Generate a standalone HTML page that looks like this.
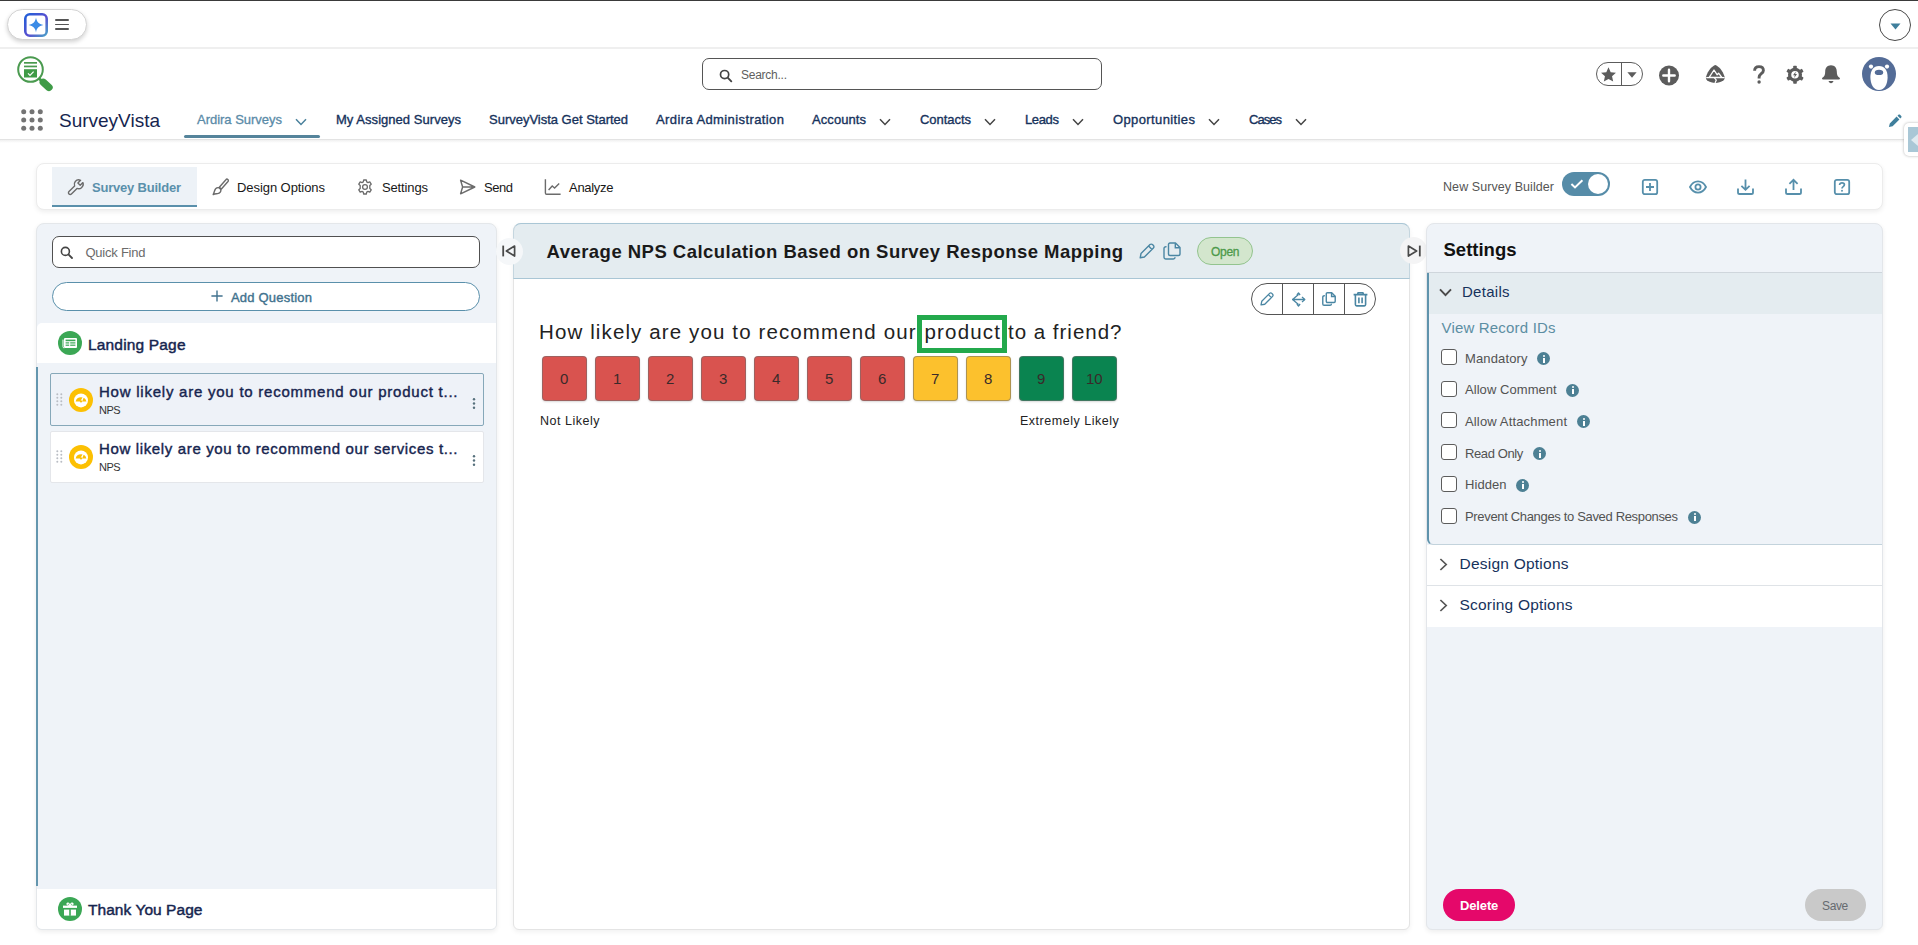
<!DOCTYPE html>
<html>
<head>
<meta charset="utf-8">
<title>SurveyVista</title>
<style>
*{box-sizing:border-box;margin:0;padding:0}
html,body{width:1918px;height:945px;overflow:hidden;background:#fff}
body{position:relative;font-family:"Liberation Sans",sans-serif;color:#16325c;font-size:13px}
.a{position:absolute}
.t{position:absolute;white-space:nowrap;line-height:1}
svg{position:absolute;overflow:visible}
.nav{font-size:13px;color:#16325c;-webkit-text-stroke:0.35px #16325c;top:113px}
.chev{top:117.5px;width:12px;height:8px}
.tab{font-size:13px;color:#181818;top:181px}
.cb{position:absolute;left:1441px;width:16px;height:16px;border:1px solid #5c5c5c;border-radius:3px;background:#fff}
.cbl{font-size:13px;color:#525252;left:1465px}
.info{position:absolute;width:13px;height:13px;border-radius:50%;background:#4d8094}
.info:before{content:"";position:absolute;left:5.5px;top:2.5px;width:2px;height:2px;background:#fff;border-radius:50%}
.info:after{content:"";position:absolute;left:5.5px;top:5.5px;width:2px;height:5px;background:#fff}
.nps{position:absolute;top:356px;width:44.5px;height:44.5px;border-radius:4px;border:1px solid rgba(110,110,110,.55);font-size:15px;line-height:44px;text-align:center;color:#3a2a2a;box-shadow:0 1px 2px rgba(0,0,0,.15)}
.r{background:#d9534f}.y{background:#fcc12d}.g{background:#0a8450}
</style>
</head>
<body>
<!-- TOP STRIP -->
<div class="a" style="left:0;top:0;width:1918px;height:1px;background:#3a3a3a"></div>
<div class="a" style="left:0;top:47px;width:1918px;height:2px;background:#efefef"></div>
<!-- top-left pill -->
<div class="a" style="left:7px;top:9px;width:80px;height:31px;border-radius:16px;background:#fff;border:1px solid #d4d4d4;box-shadow:0 2px 4px rgba(0,0,0,.18)"></div>
<svg style="left:24px;top:13px" width="24" height="24" viewBox="0 0 24 24">
<defs><linearGradient id="gb" x1="0" y1="0" x2="1" y2="1"><stop offset="0" stop-color="#1f5fd8"/><stop offset=".55" stop-color="#5a4fd0"/><stop offset="1" stop-color="#4aa0c8"/></linearGradient></defs>
<rect x="1.3" y="1.3" width="21.4" height="21.4" rx="4.5" fill="#fff" stroke="url(#gb)" stroke-width="2.6"/>
<path d="M12 4.6 C12.7 9 14.6 10.9 19.4 12 C14.6 13.1 12.7 15 12 19.4 C11.3 15 9.4 13.1 4.6 12 C9.4 10.9 11.3 9 12 4.6Z" fill="#3b8be6"/>
</svg>
<div class="a" style="left:55px;top:19px;width:14px;height:1.8px;background:#555;border-radius:1px"></div>
<div class="a" style="left:55px;top:23.5px;width:14px;height:1.8px;background:#555;border-radius:1px"></div>
<div class="a" style="left:55px;top:28px;width:14px;height:1.8px;background:#555;border-radius:1px"></div>
<!-- top-right circle -->
<div class="a" style="left:1879px;top:9px;width:32px;height:32px;border-radius:50%;border:1px solid #4a4a4a;background:#fff"></div>
<svg style="left:1889.5px;top:22.5px" width="11" height="7" viewBox="0 0 11 7"><path d="M0.5 0.5 H10.5 L5.5 6.5Z" fill="#3f7f9c"/></svg>
<!-- SECTION:TOP -->
<!-- logo -->
<svg style="left:14px;top:53px" width="44" height="42" viewBox="0 0 44 42">
<circle cx="16.5" cy="16.5" r="12.3" fill="#fff" stroke="#4a9a4f" stroke-width="2"/>
<line x1="25" y1="25.5" x2="30" y2="30" stroke="#3f9b47" stroke-width="3"/><line x1="29.3" y1="29.3" x2="35" y2="34.4" stroke="#3f9b47" stroke-width="7.4" stroke-linecap="round"/>
<rect x="10" y="9" width="13" height="1.7" fill="#4a9a4f"/>
<rect x="10" y="12.6" width="13" height="1.7" fill="#4a9a4f"/>
<rect x="10" y="16.2" width="13" height="8.3" fill="#3f9b47"/>
<path d="M14 20.4 l2 2 l3.6 -3.8" fill="none" stroke="#fff" stroke-width="1.2"/>
</svg>
<!-- search -->
<div class="a" style="left:702px;top:58px;width:400px;height:32px;border:1px solid #555;border-radius:7px;background:#fff"></div>
<svg style="left:719px;top:69px" width="14" height="14" viewBox="0 0 14 14"><circle cx="5.6" cy="5.6" r="4.1" fill="none" stroke="#444" stroke-width="1.7"/><line x1="8.7" y1="8.7" x2="12.3" y2="12.3" stroke="#444" stroke-width="1.9" stroke-linecap="round"/></svg>
<span class="t" id="srch" style="left:741px;top:68.8px;font-size:12px;color:#5e5e5e;letter-spacing:-0.254px">Search...</span>
<!-- star pill -->
<div class="a" style="left:1596px;top:62px;width:47px;height:24px;border:1px solid #5c5c5c;border-radius:12px;background:#fff"></div>
<div class="a" style="left:1621px;top:62px;width:1px;height:24px;background:#5c5c5c"></div>
<svg style="left:1600px;top:66px" width="17" height="17" viewBox="0 0 24 24"><path d="M12 1.8 l3.1 6.9 7.4 .8 -5.5 5.1 1.6 7.4 -6.6 -3.8 -6.6 3.8 1.6 -7.4 -5.5 -5.1 7.4 -.8z" fill="#5c5c5c"/></svg>
<svg style="left:1627px;top:72px" width="10" height="6" viewBox="0 0 10 6"><path d="M0.4 0.3 H9.6 L5 5.8Z" fill="#5c5c5c"/></svg>
<!-- plus -->
<svg style="left:1659px;top:64.5px" width="20" height="20" viewBox="0 0 20 20"><circle cx="10" cy="10.5" r="10" fill="#5c5c5c"/><path d="M10 4.8 V16.2 M4.3 10.5 H15.7" stroke="#fff" stroke-width="2.4" stroke-linecap="round"/></svg>
<!-- trailhead -->
<svg style="left:1705px;top:64px" width="21" height="20" viewBox="0 0 21 20">
<path d="M10.3 1 C13.5 2.2 17.5 6 19.6 12.8 C19.9 14 19.6 15.5 18.6 16.3 C16 18.3 13 19 10.3 19 C7.6 19 4.6 18.3 2 16.3 C1 15.5 .7 14 1 12.8 C3.1 6 7.1 2.2 10.3 1Z" fill="#5c5c5c"/>
<path d="M4.2 13.4 L9 6 L12.2 10.8 L13.6 9.2 L16.8 13.4Z" fill="none" stroke="#fff" stroke-width="1.3" stroke-linejoin="round"/>
<path d="M1.2 13.6 H19.6" stroke="#fff" stroke-width="1.3"/>
<path d="M9.3 13.6 L11.3 16 L10 19" stroke="#fff" stroke-width="1.2" fill="none"/>
</svg>
<!-- help -->
<svg style="left:1752px;top:65px" width="14" height="19" viewBox="0 0 14 19"><path d="M2.6 5.8 C2.6 3 4.6 1.6 7 1.6 C9.6 1.6 11.4 3.1 11.4 5.4 C11.4 8.6 7.1 8.8 7.1 12.2 V13.4" fill="none" stroke="#5c5c5c" stroke-width="2.9"/><circle cx="7.1" cy="17" r="1.7" fill="#5c5c5c"/></svg>
<!-- gear -->
<svg style="left:1785px;top:64px" width="20" height="21" viewBox="0 0 20 21">
<g transform="translate(10 10.7) scale(.9)" fill="#5c5c5c">
<circle r="6" fill="none" stroke="#5c5c5c" stroke-width="3.6"/>
<g id="tth"><rect x="-2" y="-10" width="4" height="4.2" rx=".8"/></g>
<use href="#tth" transform="rotate(60)"/><use href="#tth" transform="rotate(120)"/><use href="#tth" transform="rotate(180)"/><use href="#tth" transform="rotate(240)"/><use href="#tth" transform="rotate(300)"/>
<path d="M.9 -3.6 L-2.2 .7 H-.2 L-.9 3.6 L2.2 -.7 H.2Z"/>
</g></svg>
<!-- bell -->
<svg style="left:1821px;top:64px" width="20" height="20" viewBox="0 0 20 20"><path d="M10 1.2 C6.2 1.2 4.2 4 4.2 7.4 C4.2 11 3.4 12.4 1.4 13.8 C.7 14.3 1 15.6 2 15.6 H18 C19 15.6 19.3 14.3 18.6 13.8 C16.6 12.4 15.8 11 15.8 7.4 C15.8 4 13.8 1.2 10 1.2Z" fill="#5c5c5c"/><path d="M7.6 17 H12.4 C12.2 18.4 11.2 19.2 10 19.2 C8.8 19.2 7.8 18.4 7.6 17Z" fill="#5c5c5c"/></svg>
<!-- avatar -->
<svg style="left:1862px;top:57px" width="34" height="34" viewBox="0 0 34 34">
<circle cx="17" cy="17" r="17" fill="#546c97"/>
<path d="M17 9 C22.6 9 25.6 13.5 25.6 20 C25.6 27 22.6 33 17 33 C11.4 33 8.4 27 8.4 20 C8.4 13.5 11.4 9 17 9Z" fill="#fff"/>
<circle cx="9" cy="9.6" r="2.1" fill="#fff"/><circle cx="25" cy="9.6" r="2.1" fill="#fff"/>
<ellipse cx="17" cy="15.4" rx="4.2" ry="2.6" fill="#546c97"/>
</svg>
<!-- SECTION:HEADER -->
<!-- nav bottom border/shadow -->
<div class="a" style="left:0;top:139px;width:1918px;height:1px;background:#e3e3e3"></div>
<div class="a" style="left:0;top:140px;width:1918px;height:3px;background:linear-gradient(#f0f0f0,#fff)"></div>
<!-- waffle -->
<svg style="left:21px;top:109px" width="22" height="22" viewBox="0 0 22 22" fill="#747474">
<circle cx="2.7" cy="2.7" r="2.5"/><circle cx="11" cy="2.7" r="2.5"/><circle cx="19.3" cy="2.7" r="2.5"/>
<circle cx="2.7" cy="11" r="2.5"/><circle cx="11" cy="11" r="2.5"/><circle cx="19.3" cy="11" r="2.5"/>
<circle cx="2.7" cy="19.3" r="2.5"/><circle cx="11" cy="19.3" r="2.5"/><circle cx="19.3" cy="19.3" r="2.5"/>
</svg>
<span class="t" id="sv" style="left:59px;top:111px;font-size:19px;color:#16254f;letter-spacing:-0.003px">SurveyVista</span>
<div class="a" style="left:184px;top:134.7px;width:136px;height:3.2px;background:#55849b;border-radius:1.5px"></div>
<span class="t nav" id="n1" style="left:197px;color:#5a8ba8;-webkit-text-stroke:0.3px #5a8ba8;letter-spacing:-0.019px">Ardira Surveys</span>
<span class="t nav" id="n2" style="left:336px;letter-spacing:0.040px">My Assigned Surveys</span>
<span class="t nav" id="n3" style="left:489px;letter-spacing:-0.010px">SurveyVista Get Started</span>
<span class="t nav" id="n4" style="left:656px;letter-spacing:0.402px">Ardira Administration</span>
<span class="t nav" id="n5" style="left:812px;letter-spacing:0.074px">Accounts</span>
<span class="t nav" id="n6" style="left:920px;letter-spacing:-0.045px">Contacts</span>
<span class="t nav" id="n7" style="left:1025px;letter-spacing:-0.355px">Leads</span>
<span class="t nav" id="n8" style="left:1113px;letter-spacing:0.389px">Opportunities</span>
<span class="t nav" id="n9" style="left:1249px;letter-spacing:-0.965px">Cases</span>
<svg class="chev" style="left:295px"><path d="M1 1.2 L6 6.4 L11 1.2" fill="none" stroke="#4a819c" stroke-width="1.5"/></svg>
<svg class="chev" style="left:879px"><path d="M1 1.2 L6 6.4 L11 1.2" fill="none" stroke="#444" stroke-width="1.5"/></svg>
<svg class="chev" style="left:984px"><path d="M1 1.2 L6 6.4 L11 1.2" fill="none" stroke="#444" stroke-width="1.5"/></svg>
<svg class="chev" style="left:1072px"><path d="M1 1.2 L6 6.4 L11 1.2" fill="none" stroke="#444" stroke-width="1.5"/></svg>
<svg class="chev" style="left:1208px"><path d="M1 1.2 L6 6.4 L11 1.2" fill="none" stroke="#444" stroke-width="1.5"/></svg>
<svg class="chev" style="left:1295px"><path d="M1 1.2 L6 6.4 L11 1.2" fill="none" stroke="#444" stroke-width="1.5"/></svg>
<!-- pencil -->
<svg style="left:1888px;top:114px" width="14" height="14" viewBox="0 0 14 14"><path d="M8.6 2.6 L11.4 5.4 L4.6 12.2 L.9 13.1 L1.8 9.4Z M9.5 1.7 L10.4 .8 C10.9 .3 11.6 .3 12.1 .8 L13.2 1.9 C13.7 2.4 13.7 3.1 13.2 3.6 L12.3 4.5Z" fill="#3f7f9c"/></svg>
<!-- side tab -->
<div class="a" style="left:1904px;top:123px;width:20px;height:33px;background:#fff;border-radius:5px;box-shadow:0 0 3px rgba(0,0,0,.3)"></div>
<div class="a" style="left:1908px;top:127px;width:10px;height:25px;background:#a9c7d6"></div>
<svg style="left:1911px;top:134px" width="7" height="12" viewBox="0 0 7 12"><path d="M7 0 L0 6 L7 12Z" fill="#dfeaf0"/></svg>
<!-- SECTION:NAV -->
<!-- tab bar card -->
<div class="a" style="left:36px;top:163px;width:1847px;height:47px;background:#fff;border:1px solid #ececec;border-radius:8px;box-shadow:0 2px 5px rgba(0,0,0,.07)"></div>
<div class="a" style="left:52px;top:167px;width:145px;height:40px;background:#edf2f7;border-bottom:2px solid #5a90ab"></div>
<!-- wrench -->
<svg style="left:67px;top:178px" width="18" height="18" viewBox="0 0 18 18"><path d="M15.9 4.6 L13.2 7.3 L10.9 5 L13.6 2.3 C11.8 1.5 9.6 1.9 8.3 3.5 C7.2 4.8 7 6.5 7.6 8 L2 13.6 C1.3 14.3 1.3 15.3 2 16 C2.7 16.7 3.7 16.7 4.4 16 L10 10.4 C11.5 11 13.2 10.8 14.5 9.7 C16.1 8.4 16.6 6.4 15.9 4.6Z" fill="none" stroke="#6b6b6b" stroke-width="1.4" stroke-linejoin="round"/></svg>
<span class="t" id="t1" style="left:92px;top:181px;font-size:13px;font-weight:bold;color:#5a90ab;letter-spacing:-0.213px">Survey Builder</span>
<!-- brush -->
<svg style="left:212px;top:178px" width="18" height="18" viewBox="0 0 18 18"><path d="M15.7 1.4 C16.5 2 16.5 2.9 16 3.5 L9.4 11 L7.3 9.2 L13.9 1.7 C14.4 1.1 15.2 1 15.7 1.4Z M7 9.8 L8.8 11.4 C9.3 13.3 8 15.3 5.6 15.6 C4 15.8 2.4 15.6 1.2 16.6 C1.8 15.2 2.2 14.2 2.6 12.8 C3.2 10.7 5 9.3 7 9.8Z" fill="none" stroke="#6b6b6b" stroke-width="1.4" stroke-linejoin="round"/></svg>
<span class="t tab" id="t2" style="left:237px;letter-spacing:-0.069px">Design Options</span>
<!-- gear outline -->
<svg style="left:357px;top:179px" width="16" height="16" viewBox="0 0 16 16"><path d="M6.7 1 H9.3 L9.7 2.9 L11 3.6 L12.8 2.9 L14.2 5.2 L12.8 6.5 V8 V9.5 L14.2 10.8 L12.8 13.1 L11 12.4 L9.7 13.1 L9.3 15 H6.7 L6.3 13.1 L5 12.4 L3.2 13.1 L1.8 10.8 L3.2 9.5 V6.5 L1.8 5.2 L3.2 2.9 L5 3.6 L6.3 2.9Z" fill="none" stroke="#6b6b6b" stroke-width="1.3" stroke-linejoin="round"/><circle cx="8" cy="8" r="2.4" fill="none" stroke="#6b6b6b" stroke-width="1.3"/></svg>
<span class="t tab" id="t3" style="left:382px;letter-spacing:-0.141px">Settings</span>
<!-- send -->
<svg style="left:459px;top:179px" width="17" height="16" viewBox="0 0 17 16"><path d="M1.6 1.2 L15.8 8 L1.6 14.8 L3.6 8Z M3.6 8 H15" fill="none" stroke="#6b6b6b" stroke-width="1.4" stroke-linejoin="round"/></svg>
<span class="t tab" id="t4" style="left:484px;letter-spacing:-0.458px">Send</span>
<!-- analyze -->
<svg style="left:544px;top:178px" width="18" height="18" viewBox="0 0 18 18"><path d="M1.4 1.2 V15 C1.4 15.8 1.8 16.2 2.6 16.2 H16.6" fill="none" stroke="#6b6b6b" stroke-width="1.4"/><path d="M4.6 12 L8.2 8 L10.6 10 L15.2 5.6" fill="none" stroke="#6b6b6b" stroke-width="1.4"/></svg>
<span class="t tab" id="t5" style="left:569px;letter-spacing:-0.292px">Analyze</span>
<span class="t" id="t6" style="left:1443px;top:181px;font-size:12.5px;color:#555;letter-spacing:0.073px">New Survey Builder</span>
<!-- toggle -->
<div class="a" style="left:1562px;top:172px;width:48px;height:24px;border-radius:12px;background:#568ca8"></div>
<div class="a" style="left:1588px;top:174px;width:20px;height:20px;border-radius:50%;background:#fff"></div>
<svg style="left:1570px;top:179px" width="14" height="10" viewBox="0 0 14 10"><path d="M1.4 5 L5 8.4 L12.4 1.2" fill="none" stroke="#fff" stroke-width="2"/></svg>
<!-- right icons -->
<svg style="left:1642px;top:179px" width="16" height="16" viewBox="0 0 16 16"><rect x=".8" y=".8" width="14.4" height="14.4" rx="2" fill="none" stroke="#568fab" stroke-width="1.8"/><path d="M8 4 V12 M4 8 H12" stroke="#568fab" stroke-width="1.8"/></svg>
<svg style="left:1689px;top:180px" width="18" height="14" viewBox="0 0 18 14"><path d="M1 7 C3 3 5.8 1.4 9 1.4 C12.2 1.4 15 3 17 7 C15 11 12.2 12.6 9 12.6 C5.8 12.6 3 11 1 7Z" fill="none" stroke="#568fab" stroke-width="1.8"/><circle cx="9" cy="7" r="2.6" fill="none" stroke="#568fab" stroke-width="1.8"/></svg>
<svg style="left:1737px;top:179px" width="17" height="16" viewBox="0 0 17 16"><path d="M1 9.6 V13.4 C1 14.4 1.6 15 2.6 15 H14.4 C15.4 15 16 14.4 16 13.4 V9.6" fill="none" stroke="#568fab" stroke-width="1.8"/><path d="M8.5 .6 V10.6 M4.4 6.8 L8.5 10.8 L12.6 6.8" fill="none" stroke="#568fab" stroke-width="1.8"/></svg>
<svg style="left:1785px;top:179px" width="17" height="16" viewBox="0 0 17 16"><path d="M1 9.6 V13.4 C1 14.4 1.6 15 2.6 15 H14.4 C15.4 15 16 14.4 16 13.4 V9.6" fill="none" stroke="#568fab" stroke-width="1.8"/><path d="M8.5 11 V1 M4.4 4.8 L8.5 .8 L12.6 4.8" fill="none" stroke="#568fab" stroke-width="1.8"/></svg>
<svg style="left:1834px;top:179px" width="16" height="16" viewBox="0 0 16 16"><rect x=".8" y=".8" width="14.4" height="14.4" rx="2" fill="none" stroke="#568fab" stroke-width="1.8"/><path d="M5.6 6 C5.6 4.6 6.6 3.8 8 3.8 C9.4 3.8 10.4 4.6 10.4 5.8 C10.4 7.6 8 7.6 8 9.4" fill="none" stroke="#568fab" stroke-width="1.7"/><circle cx="8" cy="11.7" r=".95" fill="#568fab"/></svg>
<!-- SECTION:TABBAR -->
<!-- left panel -->
<div class="a" style="left:36px;top:223px;width:461px;height:707px;background:#eff3f8;border:1px solid #e4e7ea;border-radius:8px 8px 6px 6px;box-shadow:0 2px 5px rgba(0,0,0,.07);overflow:hidden">
 <div class="a" style="left:0;top:99px;width:461px;height:40px;background:#fff;border-radius:5px 0 0 0"></div>
 <div class="a" style="left:0;top:665px;width:461px;height:42px;background:#fff"></div>
</div>
<div class="a" style="left:36px;top:367px;width:2.2px;height:519px;background:#6496ae"></div>
<div class="a" style="left:52px;top:236px;width:428px;height:32px;background:#fff;border:1px solid #505050;border-radius:7px"></div>
<svg style="left:60px;top:246px" width="14" height="14" viewBox="0 0 14 14"><circle cx="5.4" cy="5.4" r="4" fill="none" stroke="#444" stroke-width="1.6"/><line x1="8.4" y1="8.4" x2="12" y2="12" stroke="#444" stroke-width="1.8" stroke-linecap="round"/></svg>
<span class="t" id="qf" style="left:85.5px;top:246px;font-size:13px;color:#6b6b6b;letter-spacing:-0.238px">Quick Find</span>
<div class="a" style="left:52px;top:282px;width:428px;height:29px;background:#fff;border:1px solid #5a90ab;border-radius:15px"></div>
<svg style="left:211px;top:290px" width="12" height="12" viewBox="0 0 12 12"><path d="M6 .4 V11.6 M.4 6 H11.6" stroke="#41728e" stroke-width="1.4"/></svg>
<span class="t" id="aq" style="left:231px;top:290.5px;font-size:13px;color:#41728e;-webkit-text-stroke:.4px #41728e;letter-spacing:0.202px">Add Question</span>
<!-- landing page -->
<svg style="left:57.5px;top:331px" width="24" height="24" viewBox="0 0 24 24"><circle cx="12" cy="12" r="12" fill="#3ba755"/><rect x="6" y="7" width="13" height="10" rx="1" fill="#fff"/><path d="M5 8.6 V15.6 C5 16.4 5.4 17 6.2 17" stroke="#fff" stroke-width="1" fill="none"/><rect x="7.6" y="8.6" width="9.8" height="1.6" fill="#3ba755"/><rect x="7.6" y="11.3" width="3.6" height="1.2" fill="#3ba755"/><rect x="7.6" y="13.6" width="3.6" height="1.2" fill="#3ba755"/><rect x="12.2" y="11.3" width="5.2" height="1.2" fill="#3ba755"/><rect x="12.2" y="13.6" width="5.2" height="1.2" fill="#3ba755"/></svg>
<span class="t" id="lp" style="left:88px;top:336.5px;font-size:15.5px;color:#16254f;-webkit-text-stroke:.45px #16254f;letter-spacing:0.166px">Landing Page</span>
<!-- item 1 -->
<div class="a" style="left:50px;top:373px;width:434px;height:53px;background:#eef2f8;border:1px solid #86a8b9;border-radius:2px"></div>
<svg style="left:56px;top:392.5px" width="7" height="13" viewBox="0 0 7 13" fill="#b9bdc4"><circle cx="1.3" cy="1.3" r="1"/><circle cx="5.3" cy="1.3" r="1"/><circle cx="1.3" cy="4.8" r="1"/><circle cx="5.3" cy="4.8" r="1"/><circle cx="1.3" cy="8.3" r="1"/><circle cx="5.3" cy="8.3" r="1"/><circle cx="1.3" cy="11.8" r="1"/><circle cx="5.3" cy="11.8" r="1"/></svg><svg style="left:69px;top:388px" width="24" height="24" viewBox="0 0 24 24"><circle cx="12" cy="12" r="12" fill="#fcc003"/><circle cx="12" cy="12.4" r="7" fill="#fff"/><path d="M6.6 13.4 A5.6 5.6 0 0 1 17.4 13.4Z" fill="#fcc003"/><path d="M11.2 13.6 L14.6 7.6 L15.4 8 L12.8 14.2Z" fill="#fff"/><circle cx="12" cy="13.4" r="1.1" fill="#fcc003"/></svg>
<span class="t" id="q1" style="left:99px;top:383.5px;font-size:15px;color:#16254f;-webkit-text-stroke:.4px #16254f;letter-spacing:0.763px">How likely are you to recommend our product t...</span>
<span class="t" id="np1" style="left:99px;top:405px;font-size:11px;color:#333;letter-spacing:-0.562px">NPS</span>
<svg style="left:472px;top:396.5px" width="4" height="13" viewBox="0 0 4 13" fill="#56707c"><circle cx="2" cy="2.3" r="1.2"/><circle cx="2" cy="6.5" r="1.2"/><circle cx="2" cy="10.7" r="1.2"/></svg>
<!-- item 2 -->
<div class="a" style="left:50px;top:431px;width:434px;height:52px;background:#fff;border:1px solid #e4e6ea;border-radius:2px"></div>
<svg style="left:56px;top:449.5px" width="7" height="13" viewBox="0 0 7 13" fill="#b9bdc4"><circle cx="1.3" cy="1.3" r="1"/><circle cx="5.3" cy="1.3" r="1"/><circle cx="1.3" cy="4.8" r="1"/><circle cx="5.3" cy="4.8" r="1"/><circle cx="1.3" cy="8.3" r="1"/><circle cx="5.3" cy="8.3" r="1"/><circle cx="1.3" cy="11.8" r="1"/><circle cx="5.3" cy="11.8" r="1"/></svg><svg style="left:69px;top:445px" width="24" height="24" viewBox="0 0 24 24"><circle cx="12" cy="12" r="12" fill="#fcc003"/><circle cx="12" cy="12.4" r="7" fill="#fff"/><path d="M6.6 13.4 A5.6 5.6 0 0 1 17.4 13.4Z" fill="#fcc003"/><path d="M11.2 13.6 L14.6 7.6 L15.4 8 L12.8 14.2Z" fill="#fff"/><circle cx="12" cy="13.4" r="1.1" fill="#fcc003"/></svg>
<span class="t" id="q2" style="left:99px;top:440.5px;font-size:15px;color:#16254f;-webkit-text-stroke:.4px #16254f;letter-spacing:0.643px">How likely are you to recommend our services t...</span>
<span class="t" id="np2" style="left:99px;top:462px;font-size:11px;color:#333;letter-spacing:-0.562px">NPS</span>
<svg style="left:472px;top:453.5px" width="4" height="13" viewBox="0 0 4 13" fill="#56707c"><circle cx="2" cy="2.3" r="1.2"/><circle cx="2" cy="6.5" r="1.2"/><circle cx="2" cy="10.7" r="1.2"/></svg>
<!-- thank you page -->
<svg style="left:57.5px;top:897px" width="24" height="24" viewBox="0 0 24 24"><circle cx="12" cy="12" r="12" fill="#3ba755"/><rect x="5" y="8.6" width="14" height="2.3" fill="#fff"/><rect x="6" y="12.6" width="12" height="6" fill="#fff"/><rect x="11.2" y="12.2" width="1.6" height="6.6" fill="#3ba755"/><path d="M12 9 C9.4 9 7.9 7.7 8.5 6.3 C9.1 5 11.4 5.4 12 7.4 C12.6 5.4 14.9 5 15.5 6.3 C16.1 7.7 14.6 9 12 9Z" fill="#fff"/><circle cx="10.3" cy="7.2" r=".55" fill="#3ba755"/><circle cx="13.7" cy="7.2" r=".55" fill="#3ba755"/></svg>
<span class="t" id="ty" style="left:88px;top:901.7px;font-size:15.5px;color:#16254f;-webkit-text-stroke:.45px #16254f;letter-spacing:0.055px">Thank You Page</span>
<!-- SECTION:LEFT -->
<!-- middle panel -->
<div class="a" style="left:513px;top:223px;width:897px;height:707px;background:#fff;border:1px solid #e4e4e4;border-radius:8px 8px 6px 6px;box-shadow:0 2px 5px rgba(0,0,0,.06)"></div>
<div class="a" style="left:513px;top:223px;width:897px;height:56px;background:#e4ecf0;border:1px solid #a9c6d5;border-left-color:#c5d6df;border-right-color:#c5d6df;border-radius:8px 8px 0 0"></div>
<!-- collapse buttons -->
<div class="a" style="left:495.5px;top:237.5px;width:27px;height:27px;border-radius:50%;background:#f5f7f9"></div>
<svg style="left:502px;top:245px" width="14" height="12" viewBox="0 0 14 12"><path d="M1.2 .6 V11.4" stroke="#4a4a4a" stroke-width="1.8"/><path d="M12.6 1 L4.4 6 L12.6 11Z" fill="none" stroke="#4a4a4a" stroke-width="1.7" stroke-linejoin="round"/></svg>
<div class="a" style="left:1400px;top:236.5px;width:27px;height:27px;border-radius:50%;background:#f4f4f5"></div>
<svg style="left:1407px;top:245px" width="14" height="12" viewBox="0 0 14 12"><path d="M12.8 .6 V11.4" stroke="#4a4a4a" stroke-width="1.8"/><path d="M1.4 1 L9.6 6 L1.4 11Z" fill="none" stroke="#4a4a4a" stroke-width="1.7" stroke-linejoin="round"/></svg>
<span class="t" id="ttl" style="left:546.5px;top:243px;font-size:18.5px;font-weight:bold;color:#1a1a1a;letter-spacing:0.475px">Average NPS Calculation Based on Survey Response Mapping</span>
<!-- title pencil + copy -->
<svg style="left:1139px;top:243px" width="16" height="16" viewBox="0 0 16 16"><path d="M11 1.6 C11.7 .9 12.8 .9 13.5 1.6 L14.4 2.5 C15.1 3.2 15.1 4.3 14.4 5 L5.4 14 L1.2 14.8 L2 10.6Z M9.6 3 L13 6.4" fill="none" stroke="#4a86a3" stroke-width="1.4" stroke-linejoin="round"/></svg>
<svg style="left:1163px;top:242px" width="18" height="18" viewBox="0 0 18 18"><path d="M7 1 H12.5 L17 5.5 V12 C17 12.9 16.4 13.5 15.5 13.5 H7 C6.1 13.5 5.5 12.9 5.5 12 V2.5 C5.5 1.6 6.1 1 7 1Z" fill="none" stroke="#4a86a3" stroke-width="1.4" stroke-linejoin="round"/><path d="M12.3 1.3 V5.7 H16.7" fill="none" stroke="#4a86a3" stroke-width="1.4"/><path d="M3 4.8 C1.7 4.8 1 5.5 1 6.6 V15.3 C1 16.4 1.7 17 2.7 17 H10.3 C11.4 17 12 16.4 12 15.6" fill="none" stroke="#4a86a3" stroke-width="1.4" stroke-linecap="round"/></svg>
<!-- open badge -->
<div class="a" style="left:1197px;top:237px;width:56px;height:28px;border-radius:14px;background:#d3e6cd;border:1px solid #93c48e"></div>
<span class="t" id="op" style="left:1211px;top:245.5px;font-size:12px;color:#4d9a4a;-webkit-text-stroke:.3px #4d9a4a;letter-spacing:-0.286px">Open</span>
<!-- action pill -->
<div class="a" style="left:1251px;top:283px;width:125px;height:32px;border-radius:16px;background:#fff;border:1px solid #555"></div>
<div class="a" style="left:1282px;top:283px;width:1px;height:32px;background:#555"></div>
<div class="a" style="left:1313px;top:283px;width:1px;height:32px;background:#555"></div>
<div class="a" style="left:1344px;top:283px;width:1px;height:32px;background:#555"></div>
<svg style="left:1260px;top:292px" width="14" height="14" viewBox="0 0 16 16"><path d="M11 1.6 C11.7 .9 12.8 .9 13.5 1.6 L14.4 2.5 C15.1 3.2 15.1 4.3 14.4 5 L5.4 14 L1.2 14.8 L2 10.6Z M9.6 3 L13 6.4" fill="none" stroke="#4a86a3" stroke-width="1.5" stroke-linejoin="round"/></svg>
<svg style="left:1291px;top:291.5px" width="15" height="15" viewBox="0 0 15 15"><path d="M1 7.5 H13.6 M1.6 7.5 L7.5 2.4 M1.6 7.5 L7.5 12.6" fill="none" stroke="#4a86a3" stroke-width="1.3"/><path d="M11 5 L13.8 7.5 L11 10 M5.9 3 L7.5 1 L9.1 3 M5.9 12 L7.5 14 L9.1 12" fill="none" stroke="#4a86a3" stroke-width="1.3" stroke-linejoin="round"/></svg>
<svg style="left:1322px;top:292px" width="14" height="14" viewBox="0 0 18 18"><path d="M7 1 H12.5 L17 5.5 V12 C17 12.9 16.4 13.5 15.5 13.5 H7 C6.1 13.5 5.5 12.9 5.5 12 V2.5 C5.5 1.6 6.1 1 7 1Z" fill="none" stroke="#4a86a3" stroke-width="1.8" stroke-linejoin="round"/><path d="M12.3 1.3 V5.7 H16.7" fill="none" stroke="#4a86a3" stroke-width="1.8"/><path d="M3 4.8 C1.7 4.8 1 5.5 1 6.6 V15.3 C1 16.4 1.7 17 2.7 17 H10.3 C11.4 17 12 16.4 12 15.6" fill="none" stroke="#4a86a3" stroke-width="1.8" stroke-linecap="round"/></svg>
<svg style="left:1352.5px;top:291.5px" width="15" height="15" viewBox="0 0 15 15"><path d="M.6 2.6 H14.4 M4.8 2.4 V1.4 C4.8 1 5 .8 5.4 .8 H9.6 C10 .8 10.2 1 10.2 1.4 V2.4" fill="none" stroke="#4a86a3" stroke-width="1.6"/><path d="M2.4 3 V12.6 C2.4 13.4 2.9 13.9 3.6 13.9 H11.4 C12.1 13.9 12.6 13.4 12.6 12.6 V3" fill="none" stroke="#4a86a3" stroke-width="1.6"/><path d="M5.9 5.4 V11.2 M9.1 5.4 V11.2" stroke="#4a86a3" stroke-width="1.6"/></svg>
<!-- question -->
<span class="t" id="qa" style="left:539px;top:321.5px;font-size:20.5px;color:#222;letter-spacing:1.121px">How likely are you to recommend our</span>
<div class="a" style="left:917px;top:315px;width:90px;height:38px;border:5px solid #23a94c;background:#fff"></div>
<span class="t" id="qb" style="left:924.5px;top:321.5px;font-size:20.5px;color:#222;letter-spacing:1.185px">product</span>
<span class="t" id="qc" style="left:1008px;top:321.5px;font-size:20.5px;color:#222;letter-spacing:0.993px">to a friend?</span>
<div class="nps r" style="left:542px">0</div>
<div class="nps r" style="left:595px">1</div>
<div class="nps r" style="left:648px">2</div>
<div class="nps r" style="left:701px">3</div>
<div class="nps r" style="left:754px">4</div>
<div class="nps r" style="left:807px">5</div>
<div class="nps r" style="left:860px">6</div>
<div class="nps y" style="left:913px">7</div>
<div class="nps y" style="left:966px">8</div>
<div class="nps g" style="left:1019px">9</div>
<div class="nps g" style="left:1072px">10</div>
<span class="t" id="nl" style="left:540px;top:415.3px;font-size:12.5px;color:#222;letter-spacing:0.512px">Not Likely</span>
<span class="t" id="el" style="left:1020px;top:415.3px;font-size:12.5px;color:#222;letter-spacing:0.513px">Extremely Likely</span>
<!-- SECTION:MIDDLE -->
<!-- right panel -->
<div class="a" style="left:1426px;top:223px;width:457px;height:707px;background:#eff3f8;border:1px solid #e3e6ea;border-radius:8px 8px 6px 6px;box-shadow:0 2px 5px rgba(0,0,0,.07);overflow:hidden">
 <div class="a" style="left:0;top:48px;width:457px;height:1px;background:#cfd6dc"></div>
 <div class="a" style="left:0;top:49px;width:457px;height:41px;background:#e4ecf0"></div>
 <div class="a" style="left:0;top:49px;width:457px;height:272px;border-left:2.5px solid #5f93ac;border-bottom:1px solid #c3d3dc;border-radius:0 0 0 6px"></div>
 <div class="a" style="left:0;top:321px;width:457px;height:41px;background:#fff;border-bottom:1px solid #dfe3e7"></div>
 <div class="a" style="left:0;top:362px;width:457px;height:41px;background:#fff"></div>
</div>
<span class="t" id="st" style="left:1443.5px;top:241.0px;font-size:18.5px;font-weight:bold;color:#111;letter-spacing:0.002px">Settings</span>
<svg style="left:1439px;top:288px" width="13" height="9" viewBox="0 0 13 9"><path d="M1 1.4 L6.5 7.2 L12 1.4" fill="none" stroke="#4a4a4a" stroke-width="1.9"/></svg>
<span class="t" id="dt" style="left:1462px;top:283.5px;font-size:15px;color:#16325c;letter-spacing:0.273px">Details</span>
<span class="t" id="vr" style="left:1441.5px;top:319.5px;font-size:15px;color:#5c8ea3;letter-spacing:0.183px">View Record IDs</span>
<div class="cb" style="top:349.0px"></div><span class="t cbl" id="c1" style="top:351.5px;letter-spacing:0.135px">Mandatory</span><div class="info" style="left:1537.3px;top:352.0px"></div>
<div class="cb" style="top:380.7px"></div><span class="t cbl" id="c2" style="top:383.2px;letter-spacing:0.056px">Allow Comment</span><div class="info" style="left:1566.1px;top:383.7px"></div>
<div class="cb" style="top:412.3px"></div><span class="t cbl" id="c3" style="top:414.8px;letter-spacing:0.152px">Allow Attachment</span><div class="info" style="left:1577.3px;top:415.3px"></div>
<div class="cb" style="top:444.0px"></div><span class="t cbl" id="c4" style="top:446.5px;letter-spacing:-0.403px">Read Only</span><div class="info" style="left:1533.1px;top:447.0px"></div>
<div class="cb" style="top:475.6px"></div><span class="t cbl" id="c5" style="top:478.1px;letter-spacing:0.059px">Hidden</span><div class="info" style="left:1516.3px;top:478.6px"></div>
<div class="cb" style="top:507.7px"></div><span class="t cbl" id="c6" style="top:510.2px;letter-spacing:-0.334px">Prevent Changes to Saved Responses</span><div class="info" style="left:1688.1px;top:510.7px"></div>
<svg style="left:1439px;top:558px" width="9" height="13" viewBox="0 0 9 13"><path d="M1.4 1 L7.2 6.5 L1.4 12" fill="none" stroke="#555" stroke-width="1.7"/></svg>
<span class="t" id="do" style="left:1459.5px;top:555.7px;font-size:15.5px;color:#16325c;letter-spacing:0.232px">Design Options</span>
<svg style="left:1439px;top:599px" width="9" height="13" viewBox="0 0 9 13"><path d="M1.4 1 L7.2 6.5 L1.4 12" fill="none" stroke="#555" stroke-width="1.7"/></svg>
<span class="t" id="so" style="left:1459.5px;top:597px;font-size:15.5px;color:#16325c;letter-spacing:0.194px">Scoring Options</span>
<div class="a" style="left:1443px;top:889px;width:72px;height:32px;border-radius:16px;background:#e5086a"></div>
<span class="t" id="del" style="left:1460px;top:899px;font-size:13px;font-weight:bold;color:#fff;letter-spacing:-0.146px">Delete</span>
<div class="a" style="left:1805px;top:889px;width:61px;height:32px;border-radius:16px;background:#c9c9c9"></div>
<span class="t" id="sav" style="left:1822px;top:899.5px;font-size:12px;color:#666b70;letter-spacing:-0.353px">Save</span>
<!-- SECTION:RIGHT -->
</body>
</html>
